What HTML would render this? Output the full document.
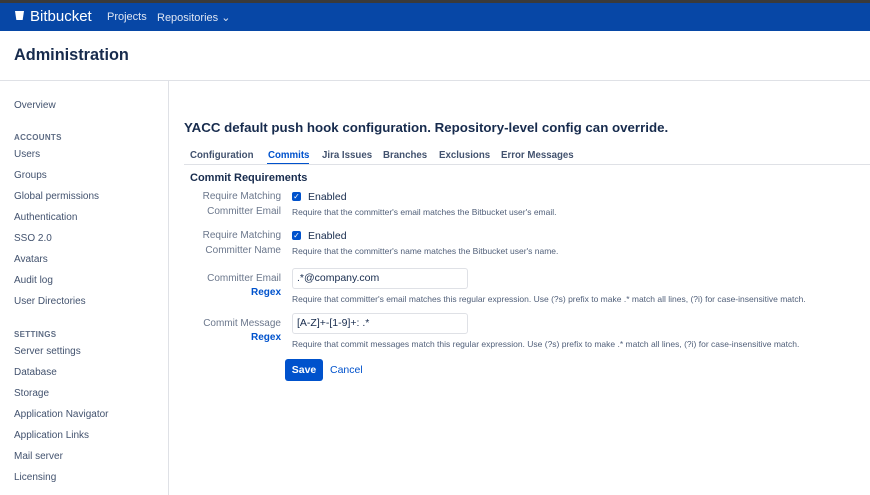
<!DOCTYPE html>
<html><head><meta charset="utf-8"><style>
*{margin:0;padding:0;box-sizing:border-box}
body{width:870px;height:495px;overflow:hidden;background:#fff;font-family:"Liberation Sans",sans-serif;color:#172b4d;position:relative}
.a{position:absolute;white-space:nowrap}
.top{left:0;top:0;width:870px;height:3px;background:#3a3a3a}
.hdr{left:0;top:3px;width:870px;height:28px;background:#0747a6}
.nav{color:#dfe6f3;font-size:11px}
.side{font-size:10px;color:#42526e}
.sec{font-size:8px;font-weight:bold;color:#5e6c84;letter-spacing:.3px}
.tab{font-size:9.7px;color:#42526e;font-weight:bold;top:150px}
.lbl{font-size:10px;color:#6b778c;text-align:right;width:100px}
.desc{font-size:8.5px;color:#505f79}
.inp{border:1px solid #dfe1e6;border-radius:3px;width:176px;height:21px;font-size:10.5px;padding:3px 4px;color:#172b4d}
.cb{width:9px;height:9px;background:#0052cc;border-radius:2px;color:#fff;font-size:8px;line-height:9px;text-align:center}
.rx{font-size:10px;color:#0052cc;font-weight:bold;right:589px}
</style></head><body>
<div class="a top"></div>
<div class="a hdr"></div>
<div class="a" style="left:15px;top:11px;width:9px;height:9px;background:#fff;clip-path:polygon(0 0,100% 0,85% 100%,15% 100%)"></div>
<div class="a" style="left:30px;top:8px;font-size:15px;color:#fff">Bitbucket</div>
<div class="a nav" style="left:107px;top:11px">Projects</div>
<div class="a nav" style="left:157px;top:11px">Repositories ⌄</div>
<div class="a" style="left:14px;top:46px;font-size:16.3px;font-weight:bold;color:#172b4d">Administration</div>
<div class="a" style="left:0;top:80px;width:870px;height:1px;background:#dfe1e6"></div>
<div class="a" style="left:168px;top:80px;width:1px;height:415px;background:#dfe1e6"></div>
<div class="a side" style="left:14px;top:100px">Overview</div>
<div class="a sec" style="left:14px;top:133px">ACCOUNTS</div>
<div class="a side" style="left:14px;top:149px">Users</div>
<div class="a side" style="left:14px;top:170px">Groups</div>
<div class="a side" style="left:14px;top:191px">Global permissions</div>
<div class="a side" style="left:14px;top:212px">Authentication</div>
<div class="a side" style="left:14px;top:233px">SSO 2.0</div>
<div class="a side" style="left:14px;top:254px">Avatars</div>
<div class="a side" style="left:14px;top:275px">Audit log</div>
<div class="a side" style="left:14px;top:296px">User Directories</div>
<div class="a sec" style="left:14px;top:330px">SETTINGS</div>
<div class="a side" style="left:14px;top:346px">Server settings</div>
<div class="a side" style="left:14px;top:367px">Database</div>
<div class="a side" style="left:14px;top:388px">Storage</div>
<div class="a side" style="left:14px;top:409px">Application Navigator</div>
<div class="a side" style="left:14px;top:430px">Application Links</div>
<div class="a side" style="left:14px;top:451px">Mail server</div>
<div class="a side" style="left:14px;top:472px">Licensing</div>
<div class="a" style="left:184px;top:120px;font-size:13.3px;font-weight:bold;color:#172b4d">YACC default push hook configuration. Repository-level config can override.</div>
<div class="a tab" style="left:190px">Configuration</div>
<div class="a tab" style="left:268px;color:#0052cc">Commits</div>
<div class="a" style="left:267px;top:163px;width:42px;height:2px;background:#0052cc"></div>
<div class="a tab" style="left:322px">Jira Issues</div>
<div class="a tab" style="left:383px">Branches</div>
<div class="a tab" style="left:439px">Exclusions</div>
<div class="a tab" style="left:501px">Error Messages</div>
<div class="a" style="left:184px;top:164px;width:686px;height:1px;background:#dfe1e6"></div>
<div class="a" style="left:190px;top:172px;font-size:11px;font-weight:bold">Commit Requirements</div>
<div class="a lbl" style="left:181px;top:191px">Require Matching</div>
<div class="a lbl" style="left:181px;top:206px">Committer Email</div>
<div class="a cb" style="left:292px;top:192px">✓</div>
<div class="a" style="left:308px;top:191px;font-size:10.5px">Enabled</div>
<div class="a desc" style="left:292px;top:207px">Require that the committer's email matches the Bitbucket user's email.</div>
<div class="a lbl" style="left:181px;top:230px">Require Matching</div>
<div class="a lbl" style="left:181px;top:245px">Committer Name</div>
<div class="a cb" style="left:292px;top:231px">✓</div>
<div class="a" style="left:308px;top:230px;font-size:10.5px">Enabled</div>
<div class="a desc" style="left:292px;top:246px">Require that the committer's name matches the Bitbucket user's name.</div>
<div class="a lbl" style="left:181px;top:273px">Committer Email</div>
<div class="a rx" style="top:287px">Regex</div>
<div class="a inp" style="left:292px;top:268px">.*@company.com</div>
<div class="a desc" style="left:292px;top:294px">Require that committer's email matches this regular expression. Use (?s) prefix to make .* match all lines, (?i) for case-insensitive match.</div>
<div class="a lbl" style="left:181px;top:318px">Commit Message</div>
<div class="a rx" style="top:332px">Regex</div>
<div class="a inp" style="left:292px;top:313px">[A-Z]+-[1-9]+: .*</div>
<div class="a desc" style="left:292px;top:339px">Require that commit messages match this regular expression. Use (?s) prefix to make .* match all lines, (?i) for case-insensitive match.</div>
<div class="a" style="left:285px;top:359px;width:38px;height:22px;background:#0052cc;border-radius:3px;color:#fff;font-size:10.5px;font-weight:bold;text-align:center;line-height:22px">Save</div>
<div class="a" style="left:330px;top:364px;font-size:10.5px;color:#0052cc">Cancel</div>
</body></html>
